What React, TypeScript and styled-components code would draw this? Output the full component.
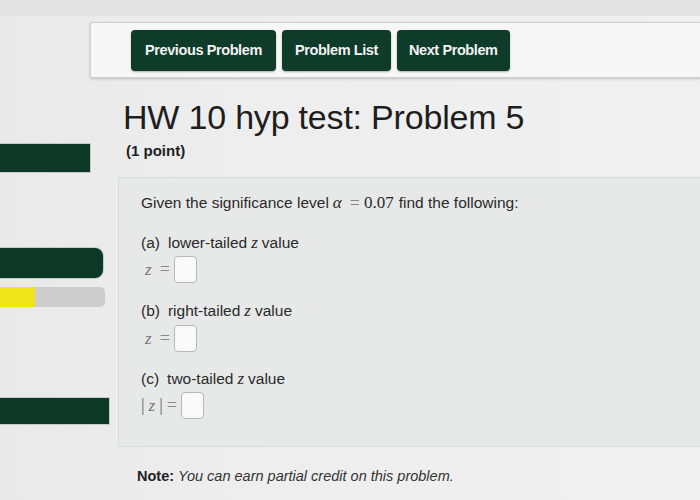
import React from 'react';
import styled, { createGlobalStyle } from 'styled-components';

const GlobalStyle = createGlobalStyle`
  html, body {
    margin: 0;
    padding: 0;
    background: #ededed;
    font-family: 'Liberation Sans', Arial, sans-serif;
    color: #222;
    overflow: hidden;
  }
`;

const Page = styled.div`
  width: 700px;
  height: 500px;
  display: flex;
  flex-direction: column;
  background: linear-gradient(90deg, #e9e9e9 0%, #eeeeee 40%, #f0f0f0 100%);
`;

const TopStrip = styled.div`
  height: 16px;
  background: #e4e4e4;
  flex-shrink: 0;
`;

const NavBar = styled.div`
  margin: 6px 0 0 90px;
  height: 56px;
  box-sizing: border-box;
  display: flex;
  align-items: center;
  gap: 6px;
  padding-left: 40px;
  background: #f7f7f7;
  border: 1px solid #cfcfcf;
  border-right: none;
  border-radius: 3px 0 0 3px;
  box-shadow: 0 1px 3px rgba(0, 0, 0, 0.2);
`;

const NavButton = styled.button<{ $pad: number }>`
  height: 41px;
  padding: 0 ${(p) => p.$pad}px;
  background: #0f3b2a;
  color: #f2f2f2;
  border: none;
  border-radius: 4px;
  font-family: 'Liberation Sans', Arial, sans-serif;
  font-weight: bold;
  font-size: 14.5px;
  letter-spacing: -0.4px;
  box-shadow: 0 1px 2px rgba(0, 0, 0, 0.3);
`;

const Body = styled.div`
  display: flex;
  flex: 1;
`;

const Sidebar = styled.div`
  width: 110px;
  flex-shrink: 0;
  display: flex;
  flex-direction: column;
  padding-top: 66px;
`;

const SideBar = styled.div<{ $w: number; $h: number; $mt: number; $round?: boolean }>`
  width: ${(p) => p.$w}px;
  height: ${(p) => p.$h}px;
  margin-top: ${(p) => p.$mt}px;
  background: #0d3826;
  border-radius: ${(p) => (p.$round ? '0 8px 8px 0' : '0')};
  box-shadow: 0 0 0 1px #c9c9c9;
`;

const Progress = styled.div`
  width: 105px;
  height: 20px;
  margin-top: 9px;
  background: #cdcdcd;
  border-radius: 0 5px 5px 0;
  overflow: hidden;
  display: flex;
`;

const ProgressFill = styled.div`
  height: 100%;
  background: #f0e41a;
`;

const Content = styled.div`
  flex: 1;
  margin-left: 8px;
  display: flex;
  flex-direction: column;
`;

const Heading = styled.h1`
  margin: 19px 0 0 5px;
  font-size: 34px;
  line-height: 40px;
  font-weight: normal;
  color: #1e1e1e;
  letter-spacing: -0.2px;
`;

const Points = styled.div`
  margin: 4px 0 0 8px;
  font-size: 15px;
  font-weight: bold;
  line-height: 20px;
`;

const ProblemBox = styled.div`
  margin-top: 16px;
  height: 270px;
  box-sizing: border-box;
  padding: 15px 0 0 22px;
  background: #e7e8e8;
  border-top: 1px solid #d9d9d9;
  border-left: 1px solid #d9d9d9;
  border-bottom: 1px solid #dcdcdc;
  border-radius: 3px 0 0 3px;
  font-size: 15.5px;
  color: #2a2a2a;
`;

const Line = styled.div<{ $mt: number }>`
  margin-top: ${(p) => p.$mt}px;
  line-height: 20px;
  display: flex;
  align-items: center;
  white-space: pre;
`;

const Label = styled.span`
  margin-right: 8px;
`;

const MathVar = styled.span`
  font-family: 'Liberation Serif', 'Times New Roman', serif;
  font-style: italic;
  font-size: 17px;
  padding: 0 4px;
`;

const MathNum = styled.span`
  font-family: 'Liberation Serif', 'Times New Roman', serif;
  font-size: 17px;
  margin-right: 5px;
`;

const Eq = styled.span`
  font-family: 'Liberation Serif', 'Times New Roman', serif;
  color: #888;
  font-size: 18px;
  margin: 0 4px;
`;

const AnswerRow = styled.div<{ $mt: number }>`
  margin-top: ${(p) => p.$mt}px;
  display: flex;
  align-items: center;
  color: #777;
`;

const AnswerBox = styled.span`
  display: inline-block;
  width: 21px;
  height: 25px;
  background: #f9f9f9;
  border: 1px solid #b8b8b8;
  border-radius: 4px;
`;

const Abs = styled.span`
  font-family: 'Liberation Serif', 'Times New Roman', serif;
  font-size: 18px;
  color: #666;
`;

const Note = styled.div`
  margin: 21px 0 0 19px;
  font-size: 14.5px;
  color: #222;
  & em {
    color: #333;
  }
`;

export default function App() {
  return (
    <Page>
      <GlobalStyle />
      <TopStrip />
      <NavBar>
        <NavButton $pad={14}>Previous Problem</NavButton>
        <NavButton $pad={13}>Problem List</NavButton>
        <NavButton $pad={12}>Next Problem</NavButton>
      </NavBar>
      <Body>
        <Sidebar>
          <SideBar $w={90} $h={28} $mt={0} />
          <SideBar $w={103} $h={30} $mt={76} $round />
          <Progress>
            <ProgressFill style={{ width: `${(35 / 105) * 100}%` }} />
          </Progress>
          <SideBar $w={109} $h={26} $mt={91} />
        </Sidebar>
        <Content>
          <Heading>HW 10 hyp test: Problem 5</Heading>
          <Points>(1 point)</Points>
          <ProblemBox>
            <Line $mt={0}>
              Given the significance level
              <MathVar>α</MathVar>
              <Eq>=</Eq>
              <MathNum>0.07</MathNum>
              find the following:
            </Line>
            <Line $mt={20}>
              <Label>(a)</Label>lower-tailed<MathVar>z</MathVar>value
            </Line>
            <AnswerRow $mt={3}>
              <MathVar>z</MathVar>
              <Eq>=</Eq>
              <AnswerBox />
            </AnswerRow>
            <Line $mt={18}>
              <Label>(b)</Label>right-tailed<MathVar>z</MathVar>value
            </Line>
            <AnswerRow $mt={4}>
              <MathVar>z</MathVar>
              <Eq>=</Eq>
              <AnswerBox />
            </AnswerRow>
            <Line $mt={17}>
              <Label>(c)</Label>two-tailed<MathVar>z</MathVar>value
            </Line>
            <AnswerRow $mt={3}>
              <Abs>|</Abs>
              <MathVar>z</MathVar>
              <Abs>|</Abs>
              <Eq>=</Eq>
              <AnswerBox />
            </AnswerRow>
          </ProblemBox>
          <Note>
            <b>Note:</b> <em>You can earn partial credit on this problem.</em>
          </Note>
        </Content>
      </Body>
    </Page>
  );
}
